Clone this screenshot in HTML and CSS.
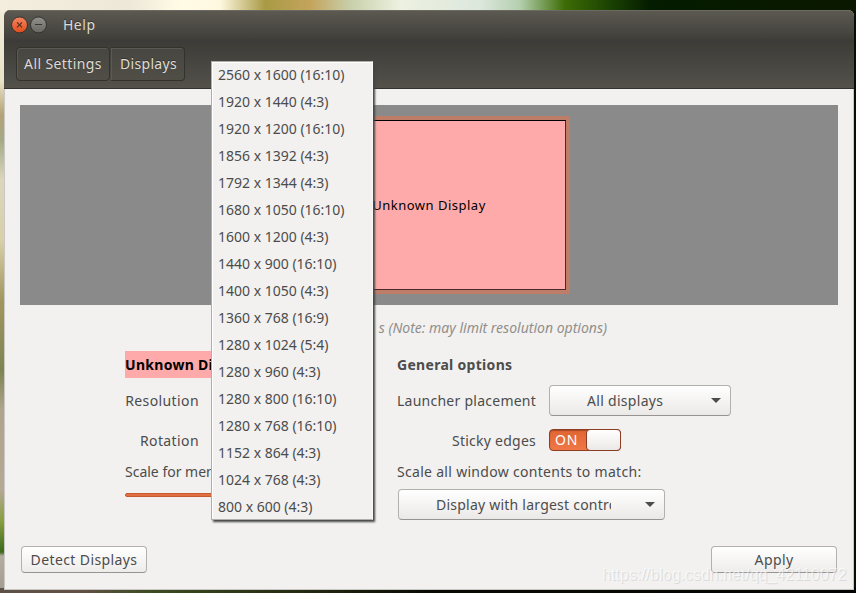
FILE: index.html
```html
<!DOCTYPE html>
<html lang="en">
<head>
<meta charset="utf-8">
<title>Displays</title>
<link rel="stylesheet" href="styles.css">
</head>
<body>
<div class="window">
  <header class="chrome">
    <div class="titlebar">
      <svg class="controls" width="40" height="20" viewBox="0 0 40 20">
        <defs>
          <linearGradient id="close" x1="0" y1="0" x2="0" y2="1"><stop offset="0" stop-color="#f58763"/><stop offset="1" stop-color="#df4c1b"/></linearGradient>
          <linearGradient id="mini" x1="0" y1="0" x2="0" y2="1"><stop offset="0" stop-color="#92918b"/><stop offset="1" stop-color="#686761"/></linearGradient>
        </defs>
        <circle cx="9.5" cy="9.9" r="8" fill="url(#close)" stroke="#35332e"/>
        <path d="M7 7.4l5 5M12 7.4l-5 5" stroke="#54301f" stroke-width="1.2"/>
        <circle cx="28.5" cy="9.9" r="8" fill="url(#mini)" stroke="#35332e"/>
        <path d="M25 9.5h7" stroke="#383732" stroke-width="1.2"/>
      </svg>
      <span class="title">Help</span>
    </div>
    <nav class="toolbar">
      <button class="crumb crumb-first">All Settings</button><button class="crumb crumb-last">Displays</button>
    </nav>
  </header>
  <main class="content">
    <div class="canvas"><div class="monitor">Unknown Display</div></div>
    <p class="note">s (Note: may limit resolution options)</p>
    <div class="columns">
      <section class="display-options">
        <h2 class="display-name">Unknown Display</h2>
        <div class="row row-resolution"><span class="label">Resolution</span></div>
        <div class="row row-rotation"><span class="label">Rotation</span></div>
        <div class="scale-label">Scale for menu</div>
        <div class="slider"></div>
      </section>
      <section class="general-options">
        <h2 class="heading">General options</h2>
        <div class="row row-resolution"><span class="label">Launcher placement</span><button class="combo combo-small"><span class="combo-text">All displays</span><i class="arrow"></i></button></div>
        <div class="row row-rotation"><span class="label">Sticky edges</span><div class="switch"><span class="switch-on">ON</span><span class="knob"></span></div></div>
        <div class="scale-label">Scale all window contents to match:</div>
        <button class="combo combo-large"><span class="combo-text combo-clip">Display with largest contro</span><i class="arrow"></i></button>
      </section>
    </div>
    <footer class="actions"><button class="action">Detect Displays</button><button class="action">Apply</button></footer>
  </main>
</div>
<ul class="menu">
  <li>2560 x 1600 (16:10)</li>
  <li>1920 x 1440 (4:3)</li>
  <li>1920 x 1200 (16:10)</li>
  <li>1856 x 1392 (4:3)</li>
  <li>1792 x 1344 (4:3)</li>
  <li>1680 x 1050 (16:10)</li>
  <li>1600 x 1200 (4:3)</li>
  <li>1440 x 900 (16:10)</li>
  <li>1400 x 1050 (4:3)</li>
  <li>1360 x 768 (16:9)</li>
  <li>1280 x 1024 (5:4)</li>
  <li>1280 x 960 (4:3)</li>
  <li>1280 x 800 (16:10)</li>
  <li>1280 x 768 (16:10)</li>
  <li>1152 x 864 (4:3)</li>
  <li>1024 x 768 (4:3)</li>
  <li>800 x 600 (4:3)</li>
</ul>
<div class="watermark">https://blog.csdn.net/qq_42110072</div>
</body>
</html>
```
FILE: styles.css
```css
* { box-sizing: border-box; margin: 0; padding: 0; }
body {
  height: 593px; padding: 10px 2px 3px 4px; overflow: hidden; position: relative;
  font: 14px/20px "Noto Sans", "Open Sans", sans-serif; letter-spacing: .3px; color: #4c4c4c;
  background:
    linear-gradient(90deg, #f3eedd 0, #eee8d8 130px, #fffce6 180px, #fff8e0 220px, #a99a45 265px, #c3a45c 310px, #c8cfaa 350px, #edf1e0 400px, #dce7dd 480px, #b4cfae 520px, #3d6c05 565px, #1b4202 610px, #041c00 650px, #0b1800 856px) 0 0 / 856px 12px no-repeat,
    linear-gradient(90deg, #5d5148 0, #625044 80px, #3c4c20 150px, #20260f 320px, #080a02 430px, #020401 856px) 0 588px / 856px 5px no-repeat,
    linear-gradient(180deg, #f3eedd 0, #e9e4c8 80px, #b5a276 115px, #a3aa85 140px, #dcd6bd 180px, #d8d0a8 240px, #a3965f 300px, #7d8453 370px, #b0a48e 410px, #b5a894 490px, #89a042 520px, #3c6a1c 552px, #b5aca0 556px, #a39a91 593px) 0 0 / 6px 593px no-repeat,
    #041002;
}
button { font: inherit; color: inherit; letter-spacing: inherit; }
.window { height: 580px; display: flex; flex-direction: column; border-radius: 6px 6px 0 0; overflow: hidden; background: #f2f1f0; }
.chrome { height: 79px; border-bottom: 1px solid #33322d; background: linear-gradient(#5d5a52 0, #403f3a 29px, #3c3b37 30px, #53514a 78px); box-shadow: inset 0 1px #6b6961; }
.titlebar { height: 30px; display: flex; align-items: center; padding: 0 0 0 6px; color: #dfdbd2; }
.controls { margin-top: -1px; }
.title { margin-left: 13px; letter-spacing: .5px; text-shadow: 0 -1px #333; }
.toolbar { display: flex; padding: 7px 12px; color: #dfdbd2; }
.crumb { height: 34px; border: 1px solid #33322d; background: linear-gradient(#474640, #504e47); box-shadow: inset 1px 1px #5b5952; text-shadow: 0 -1px #333; white-space: nowrap; }
.crumb-first { width: 94px; border-radius: 4px; letter-spacing: .4px; }
.crumb-last { width: 74px; margin-left: 1px; padding-left: 2px; border-left: 0; border-radius: 0 4px 4px 0; }
.content { flex: 1; padding: 16px 16px 16px; border: solid #c9c7c4; border-width: 0 1px 1px; display: flex; flex-direction: column; }
.canvas { height: 200px; flex: none; margin: 0 -1px; background: #8a8a8a; padding: 11px 0 0 269px; }
.monitor { width: 281px; height: 178px; border: 4px solid #bd7d68; background: #ffaaaa; box-shadow: inset 0 1px #000, inset 0 0 0 1px #4a2929; color: #000; font-size: 13px; text-align: center; padding: 75px 1px 0 0; letter-spacing: .5px; line-height: 20px; }
.note { width: 370px; align-self: flex-start; margin: 13px 0 0 216px; text-align: right; font-style: italic; letter-spacing: 0; color: #918f8b; white-space: nowrap; }
.columns { display: flex; margin: 13px 0 0 104px; height: 170px; }
.display-options { width: 272px; }
.display-name { width: 236px; height: 27px; font-size: 14px; line-height: 27px; color: #000; background: #ffaaaa; }
.heading { height: 27px; font-size: 14px; line-height: 27px; }
.general-options { width: 350px; }
.row { display: flex; align-items: center; gap: 13px; }
.row-resolution { height: 31px; margin-top: 7px; }
.row-rotation { height: 24px; margin-top: 12px; }
.row-rotation .label { padding-top: 1px; }
.display-options .label { width: 74px; letter-spacing: .4px; }
.general-options .label { width: 139px; letter-spacing: .25px; }
.label { text-align: right; white-space: nowrap; }
.scale-label { height: 20px; margin-top: 10px; white-space: nowrap; }
.display-options .scale-label { letter-spacing: 0; }
.slider { width: 236px; height: 4px; margin-top: 11px; background: #e2703f; border: 1px solid #c65a30; border-radius: 2px; }
.combo { height: 31px; border: 1px solid #b3b1ae; border-bottom-color: #969491; border-radius: 4px; background: linear-gradient(#fff, #ebe9e7); display: flex; align-items: center; justify-content: space-between; }
.combo-small { width: 182px; padding: 0 9px 0 37px; }
.combo-large { width: 267px; margin: 7px 0 0 1px; padding: 0 9px 0 37px; letter-spacing: .23px; }
.combo-clip { width: 175px; overflow: hidden; white-space: nowrap; text-align: left; }
.arrow { border: 5px solid transparent; border-top: 5px solid #4c4c4c; border-bottom: 0; }
.switch { width: 72px; height: 22px; border: 1px solid #8c3e22; border-radius: 4px; background: linear-gradient(#df6533, #f07746); display: flex; justify-content: space-between; color: #fff; box-shadow: inset 0 1px 1px #a94824; }
.switch-on { padding-left: 5px; letter-spacing: .8px; }
.knob { width: 35px; height: 22px; margin: -1px; border: 1px solid #8c3e22; border-radius: 4px; background: linear-gradient(#fff, #ebe9e7); }
.actions { display: flex; justify-content: space-between; margin-top: auto; }
.action { width: 126px; height: 27px; border: 1px solid #b3b1ae; border-bottom-color: #969491; border-radius: 4px; background: linear-gradient(#fff, #eeecea); white-space: nowrap; letter-spacing: .4px; }
.menu { position: absolute; left: 211px; top: 61px; width: 162px; height: 459px; list-style: none; background: #f2f1f0; border: 1px solid #b0aeaa; border-right-color: #f9f9f8; box-shadow: inset 1px 1px #fff, 2px 2px 2px #444; letter-spacing: 0; }
.menu li { height: 27px; line-height: 27px; padding-left: 6px; white-space: nowrap; }
.menu li:first-child { margin-top: -1px; }
.watermark { position: absolute; left: 602px; top: 565px; font: 16px/20px "Liberation Sans", Arial, sans-serif; letter-spacing: 0; color: #ffffff90; text-shadow: 1px 1px #aaaaaa50; white-space: nowrap; }
```
